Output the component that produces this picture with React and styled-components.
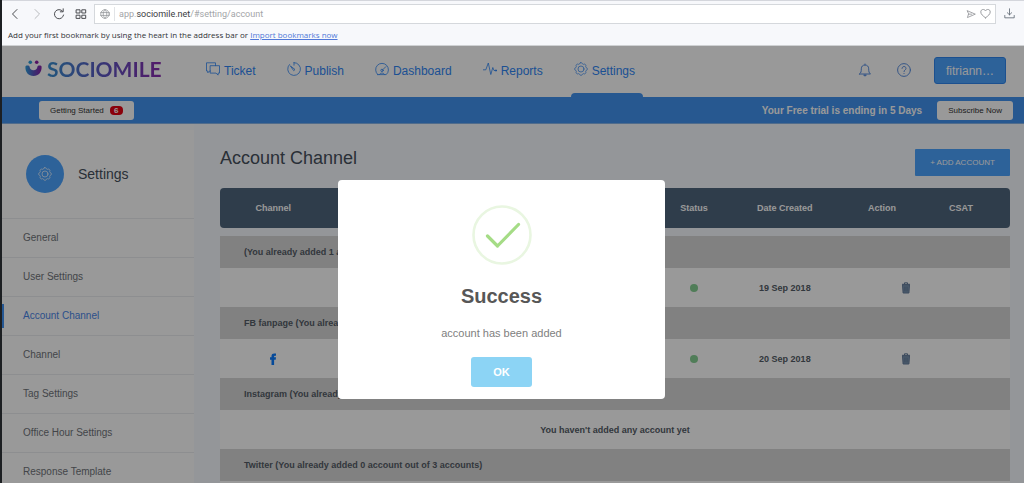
import React from "react";
import styled, { createGlobalStyle, css } from "styled-components";

const GlobalStyle = createGlobalStyle`
  *, *::before, *::after { box-sizing: border-box; }
  html, body, #root { height: 100%; }
  body {
    margin: 0;
    background: #fff;
    color: #55606b;
    font-family: "Liberation Sans", Arial, sans-serif;
    font-size: 10px;
  }
  button, input { font-family: inherit; margin: 0; }
  h1, h2, p, ul { margin: 0; padding: 0; font-weight: normal; }
  svg { display: block; flex: none; }
`;

const Window = styled.div`
  height: 100%;
  display: flex;
  flex-direction: column;
  overflow: hidden;
  border-left: 2px solid #1c1f22;
`;

/* Browser chrome */
const Chrome = styled.div`
  flex: none;
  background: #f7f8fb;
  border-top: 1px solid #d4d6dc;
  border-bottom: 1px solid #cfd1d3;
  font-family: "Open Sans", "Noto Sans", sans-serif;
`;
const Toolbar = styled.div`
  display: flex;
  align-items: center;
  height: 25px;
  padding: 0 9px 0 2px;
`;
const ToolButton = styled.button`
  display: grid;
  place-items: center;
  width: 22px;
  height: 20px;
  padding: 0;
  border: 0;
  background: none;
  color: ${(p) => (p.$faded ? "#b9bbbe" : "#4a4c50")};
`;
const AddressBar = styled.div`
  flex: 1;
  display: flex;
  align-items: center;
  gap: 4px;
  height: 20px;
  margin: 0 8px 0 2px;
  padding: 0 4px 0 5px;
  background: #fff;
  border: 1px solid #d5d8dc;
  color: #94969a;
`;
const Address = styled.div`
  flex: 1;
  padding-left: 4px;
  border-left: 1px solid #e2e4e7;
  font-family: Roboto, sans-serif;
  font-size: 9px;
  line-height: 14px;
  color: #a3a5a8;
  b { color: #3a3c40; font-weight: 400; }
`;
const BookmarkBar = styled.div`
  height: 19px;
  padding: 0 6px;
  font-size: 8px;
  line-height: 18px;
  color: #303236;
  a { color: #5078d8; }
`;

/* Application */
const Site = styled.div`
  position: relative;
  flex: 1;
  min-height: 0;
  display: flex;
  flex-direction: column;
  overflow: hidden;
  background: #f7faff;
`;
const Header = styled.header`
  flex: none;
  display: flex;
  align-items: stretch;
  height: 51px;
  padding-right: 18px;
  background: #fff;
`;
const Brand = styled.a`
  display: flex;
  align-items: center;
  gap: 5px;
  width: 177px;
  height: 45px;
  padding-left: 23px;
  text-decoration: none;
`;
const BrandName = styled.span`
  font: 700 21px/24px Lato, sans-serif;
  color: transparent;
  background: linear-gradient(90deg, #3a90d0 0%, #5a5cc4 45%, #8a2bb0 100%);
  background-clip: text;
  -webkit-background-clip: text;
`;
const Nav = styled.nav`
  flex: 1;
  display: flex;
  gap: 20px;
  padding-left: 24px;
`;
const NavLink = styled.a`
  position: relative;
  display: flex;
  align-items: center;
  gap: 4px;
  padding: 0 8px 2px 3px;
  font-size: 12px;
  color: #2f86f6;
  text-decoration: none;
  svg { margin-bottom: 4px; }
  ${(p) =>
    p.$active &&
    css`
      &::after {
        content: "";
        position: absolute;
        inset: auto 0 0 0;
        height: 4px;
        border-radius: 4px 4px 0 0;
        background: #4193f0;
      }
    `}
`;
const HeaderTools = styled.div`
  display: flex;
  align-items: center;
  gap: 25px;
  padding-bottom: 2px;
`;
const IconButton = styled.button`
  display: grid;
  place-items: center;
  padding: 0 0 1px;
  border: 0;
  background: none;
  color: #5a8fe0;
`;
const UserButton = styled.button`
  width: 72px;
  height: 27px;
  margin-left: -2px;
  padding: 0;
  border: 1px solid #2f86ee;
  border-radius: 3px;
  background: #4ba3ff;
  color: #fff;
  font-size: 12px;
`;
const TrialBar = styled.div`
  flex: none;
  display: flex;
  align-items: center;
  height: 27px;
  padding: 0 11px 0 37px;
  background: #4193f0;
  border-bottom: 1px solid #86b5ea;
`;
const SmallButton = styled.button`
  display: flex;
  align-items: center;
  justify-content: center;
  gap: 6px;
  height: 19px;
  padding: 0 11px;
  border: 0;
  border-radius: 3px;
  background: #fff;
  color: #333;
  font-size: 8px;
`;
const Count = styled.span`
  width: 13px;
  border-radius: 4px;
  background: #e60012;
  color: #fff;
  font-weight: bold;
  line-height: 9px;
  text-align: center;
`;
const TrialText = styled.p`
  margin: 0 15px 0 auto;
  font-size: 10px;
  font-weight: bold;
  color: #fff;
`;
const Body = styled.div`
  flex: 1;
  min-height: 0;
  display: flex;
`;
const Sidebar = styled.aside`
  flex: none;
  width: 192px;
  background: #fff;
  border-top: 6px solid #fbfcfe;
`;
const SidebarHead = styled.div`
  display: flex;
  align-items: center;
  gap: 14px;
  height: 88px;
  padding-left: 24px;
  font-size: 14px;
  color: #46505c;
`;
const Disc = styled.span`
  display: grid;
  place-items: center;
  width: 38px;
  height: 38px;
  border-radius: 50%;
  background: #4ba3ff;
  color: #fff;
`;
const SideLink = styled.a`
  position: relative;
  display: block;
  height: 39px;
  padding-left: 21px;
  border-top: 1px solid #ebedf0;
  font-size: 10px;
  line-height: 38px;
  color: ${(p) => (p.$active ? "#4a86e8" : "#70747a")};
  text-decoration: none;
  &::before {
    content: "";
    display: ${(p) => (p.$active ? "block" : "none")};
    position: absolute;
    left: 0;
    top: 7px;
    width: 2px;
    height: 24px;
    background: #3f92f5;
  }
`;
const Main = styled.main`
  flex: 1;
  min-width: 0;
  padding: 25px 14px 0 26px;
`;
const TitleRow = styled.div`
  display: flex;
  justify-content: space-between;
  height: 39px;
`;
const Title = styled.h1`
  font-size: 18px;
  line-height: 18px;
  color: #46505c;
`;
const AddButton = styled.button`
  width: 95px;
  height: 27px;
  padding: 0;
  border: 0;
  border-radius: 1px;
  background: #4ba3ff;
  color: #fff;
  font-size: 8px;
`;
const Table = styled.table`
  width: 100%;
  border-spacing: 0;
  table-layout: fixed;
  font-size: 9px;
  font-weight: bold;
  text-align: center;
  color: #545c66;
  th, td { padding: 0; }
  thead th {
    height: 40px;
    background: #4f667d;
    color: #fff;
  }
  thead th:first-child { border-radius: 4px 0 0 4px; }
  thead th:last-child { border-radius: 0 4px 4px 0; }
  tbody:first-of-type::before {
    content: "";
    display: table-row;
    height: 8px;
  }
`;
const GroupCell = styled.th`
  height: 32px;
  background: #d7d7d7;
  text-align: left;
  && { padding-left: 24px; }
`;
const Cell = styled.td`
  height: 39px;
  background: #fff;
`;
const ActionCell = styled(Cell)`
  && { padding-left: 49px; }
`;
const Dot = styled.span`
  display: block;
  width: 8px;
  height: 8px;
  margin: 0 auto;
  border-radius: 50%;
  background: #86d193;
`;
const ChannelMark = styled.svg`
  width: 8px;
  height: 12px;
  margin: 0 auto;
`;

/* Dialog */
const Backdrop = styled.div`
  position: absolute;
  inset: 0;
  display: flex;
  align-items: center;
  justify-content: center;
  padding: 50px 23px 0 0;
  background: rgba(0, 0, 0, 0.4);
`;
const Dialog = styled.section`
  display: flex;
  flex-direction: column;
  align-items: center;
  width: 327px;
  padding: 25px 0 12px;
  border-radius: 4px;
  background: #fff;
`;
const DialogTitle = styled.h2`
  margin-top: 18px;
  font-size: 20px;
  font-weight: bold;
  line-height: 26px;
  color: #575757;
`;
const DialogText = styled.p`
  margin-top: 15px;
  font-size: 11px;
  line-height: 18px;
  color: #808080;
`;
const OkButton = styled.button`
  width: 61px;
  height: 30px;
  margin-top: 15px;
  padding: 0;
  border: 0;
  border-radius: 3px;
  background: #8cd4f5;
  color: #fff;
  font-size: 11px;
  font-weight: bold;
`;

const Icon = ({ size = 14, box = 14, width = 1, children }) => (
  <svg
    width={size}
    height={size}
    viewBox={`0 0 ${box} ${box}`}
    fill="none"
    stroke="currentColor"
    strokeWidth={width}
    strokeLinecap="round"
    strokeLinejoin="round"
    aria-hidden="true"
  >
    {children}
  </svg>
);

const gearPath = (() => {
  const points = [];
  for (let i = 0; i < 96; i++) {
    const a = (i / 96) * Math.PI * 2;
    const r = 5.8 + 0.5 * Math.tanh(3 * Math.cos(8 * a));
    points.push(`${(7 + r * Math.sin(a)).toFixed(2)} ${(7 - r * Math.cos(a)).toFixed(2)}`);
  }
  return `M${points.join("L")}Z`;
})();
const Gear = () => (
  <Icon width={0.7}>
    <path d={gearPath} />
    <circle cx="7" cy="7" r="3" />
  </Icon>
);

const navItems = [
  ["Ticket", <Icon width={0.8}><path d="M4.5 9H3.6L1.8 10.8V9H.5V.8h9v2.9" /><path d="M4.5 3.7h9v7.4h-1.4v2L10 11.1H4.5z" /></Icon>],
  ["Publish", <Icon width={0.8}><path d="M7 .6v2.6M7 .6A6.4 6.4 0 1 1 2.5 2.5" /><path d="M3.7 4.2 8 7.5 7 8.4z" /></Icon>],
  ["Dashboard", <Icon width={0.8}><path d="M2.8 12.6h8.4A6.4 6.4 0 1 0 2.8 12.6z" /><circle cx="7" cy="8.4" r="1.2" /><path d="m8 7.5 2.8-2.8M4.5 12.3c.6-1.7 4.4-1.7 5 0" /></Icon>],
  ["Reports", <Icon width={0.8}><path d="M.3 7.8h2.5L5.3 1l2.5 11.5 2-7 1.2 3h1.2" /><circle cx="13" cy="8.5" r=".7" fill="currentColor" /></Icon>],
  ["Settings", <Gear />],
];

const sideItems = ["General", "User Settings", "Account Channel", "Channel", "Tag Settings", "Office Hour Settings", "Response Template"];

const groups = [
  { title: "(You already added 1 account out of 1 accounts)", date: "19 Sep 2018" },
  { title: "FB fanpage (You already added 1 account out of 3 accounts)", date: "20 Sep 2018", facebook: true },
  { title: "Instagram (You already added 0 account out of 3 accounts)", note: "You haven't added any account yet" },
  { title: "Twitter (You already added 0 account out of 3 accounts)" },
];

const FacebookMark = () => (
  <ChannelMark viewBox="0 0 8 12" aria-hidden="true">
    <path d="M2.5 12V6.7H1V4.3H2.5V3C2.5 1.1 3.6.4 5.2.4H7V2.7H5.9C5.3 2.7 5.1 3 5.1 3.5V4.3H7L6.7 6.7H5.1V12Z" fill="#0a7cff" />
  </ChannelMark>
);

const TrashIcon = () => (
  <svg width="10" height="12" viewBox="0 0 10 12" aria-hidden="true">
    <path d="M1.5 2.8h7l-.6 8.2H2.1z" fill="#7f97b4" stroke="#647c9c" />
    <path d="M1 2.3h8M3.5 2V.8h3V2" fill="none" stroke="#647c9c" />
    <path d="M3.7 4.5v5M5 4.5v5M6.3 4.5v5" stroke="#5c7594" strokeWidth=".6" />
  </svg>
);

const BrandMark = () => (
  <svg width="17" height="17" viewBox="0 0 17 17" aria-hidden="true">
    <defs>
      <linearGradient id="smile" x1="0" x2="1">
        <stop offset="0" stopColor="#2ea0dc" />
        <stop offset=".5" stopColor="#5a55c0" />
        <stop offset="1" stopColor="#8a1fa8" />
      </linearGradient>
    </defs>
    <path d="M.4 6.8C.4 5 4.4 5 4.6 6.8 4.8 9 6.2 10.3 8.5 10.3S12.2 9 12.4 6.8C12.6 5 16.6 5 16.6 6.8 16.8 12.2 13.6 16 8.5 16S.2 12.2.4 6.8z" fill="url(#smile)" />
    <circle cx="5.3" cy="2.3" r="1.8" fill="#2ea0dc" />
    <circle cx="11.7" cy="2.3" r="1.8" fill="#8a1fa8" />
  </svg>
);

export default function App() {
  return (
    <Window>
      <GlobalStyle />
      <Chrome>
        <Toolbar>
          <ToolButton aria-label="Back"><Icon><path d="M9 2.5 4.5 7 9 11.5" /></Icon></ToolButton>
          <ToolButton aria-label="Forward" $faded><Icon><path d="M5 2.5 9.5 7 5 11.5" /></Icon></ToolButton>
          <ToolButton aria-label="Reload"><Icon><path d="M10.6 4.2A4.6 4.6 0 1 0 11.6 8" /><path d="M11.2 1.8v3H8.3" /></Icon></ToolButton>
          <ToolButton aria-label="Speed dial"><Icon><path d="M2.5 2.8H6V6H2.5zM8.2 2.8h3.5V6H8.2zM2.5 8.2H6v3.2H2.5zM8.2 8.2h3.5v3.2H8.2z" /></Icon></ToolButton>
          <AddressBar>
            <Icon size={10} width={1.1}><circle cx="7" cy="7" r="6" /><path d="M1 5h12M1 9h12M7 1C3.5 4.5 3.5 9.5 7 13M7 1c3.5 3.5 3.5 8.5 0 12" /></Icon>
            <Address>app.<b>sociomile.net</b>/#setting/account</Address>
            <Icon size={10} width={1.2}><path d="m2 2.5 11 4.7L2 12l1.5-4.8zM3.5 7.2H8" /></Icon>
            <Icon size={11} width={1.2}><path d="M7 12.5C3.5 10 1 7.8 1 4.9 1 1.5 5.5.8 7 3.6 8.5.8 13 1.5 13 4.9c0 2.9-2.5 5.1-6 7.6z" /></Icon>
          </AddressBar>
          <Icon size={11}><path d="M7 1v7.5M4.2 6 7 8.7 9.8 6M1 9.5v3h12v-3" /></Icon>
        </Toolbar>
        <BookmarkBar>
          Add your first bookmark by using the heart in the address bar or <a href="#import">Import bookmarks now</a>
        </BookmarkBar>
      </Chrome>

      <Site>
        <Header>
          <Brand href="#home"><BrandMark /><BrandName>SOCIOMILE</BrandName></Brand>
          <Nav>
            {navItems.map(([label, icon]) => (
              <NavLink key={label} href={`#${label.toLowerCase()}`} $active={label === "Settings"}>
                {icon}{label}
              </NavLink>
            ))}
          </Nav>
          <HeaderTools>
            <IconButton aria-label="Notifications">
              <Icon><path d="M1.5 11h11c-1.5-1.2-1.8-2.3-1.8-5.2C10.7 3.4 9.2 2 7 2S3.3 3.4 3.3 5.8C3.3 8.7 3 9.8 1.5 11zM7 2V1" /><path d="M5.8 12.3c.4 1 2 1 2.4 0z" fill="currentColor" /></Icon>
            </IconButton>
            <IconButton aria-label="Help">
              <Icon><circle cx="7" cy="7" r="6.4" /><path d="M5 5.4c0-2.6 4-2.6 4 0C9 7 7 6.8 7 8.6M7 10.5v.1" /></Icon>
            </IconButton>
            <UserButton>fitriann…</UserButton>
          </HeaderTools>
        </Header>
        <TrialBar>
          <SmallButton>Getting Started <Count>6</Count></SmallButton>
          <TrialText>Your Free trial is ending in 5 Days</TrialText>
          <SmallButton>Subscribe Now</SmallButton>
        </TrialBar>
        <Body>
          <Sidebar>
            <SidebarHead><Disc><Gear /></Disc>Settings</SidebarHead>
            <nav>
              {sideItems.map((label) => (
                <SideLink key={label} href="#setting" $active={label === "Account Channel"}>{label}</SideLink>
              ))}
            </nav>
          </Sidebar>
          <Main>
            <TitleRow>
              <Title>Account Channel</Title>
              <AddButton>+ ADD ACCOUNT</AddButton>
            </TitleRow>
            <Table>
              <colgroup>
                <col width="13.5%" />
                <col />
                <col width="6%" />
                <col width="17%" />
                <col width="7.6%" />
                <col width="12.4%" />
              </colgroup>
              <thead>
                <tr><th>Channel</th><th /><th>Status</th><th>Date Created</th><th>Action</th><th>CSAT</th></tr>
              </thead>
              {groups.map((g) => (
                <tbody key={g.title}>
                  <tr><GroupCell colSpan={6}>{g.title}</GroupCell></tr>
                  {g.date ? (
                    <tr>
                      <Cell>{g.facebook && <FacebookMark />}</Cell>
                      <Cell />
                      <Cell><Dot /></Cell>
                      <Cell>{g.date}</Cell>
                      <ActionCell><TrashIcon /></ActionCell>
                      <Cell />
                    </tr>
                  ) : (
                    <tr><Cell colSpan={6}>{g.note}</Cell></tr>
                  )}
                </tbody>
              ))}
            </Table>
          </Main>
        </Body>
        <Backdrop>
          <Dialog role="dialog" aria-labelledby="dialog-title">
            <svg width="60" height="60" viewBox="0 0 60 60" fill="none" aria-hidden="true">
              <circle cx="30" cy="30" r="28.5" stroke="#e9f6e1" strokeWidth="2.6" />
              <path d="M15.5 31 25.5 41 46.5 19.5" stroke="#a5dc86" strokeWidth="3.2" strokeLinecap="round" strokeLinejoin="round" />
            </svg>
            <DialogTitle id="dialog-title">Success</DialogTitle>
            <DialogText>account has been added</DialogText>
            <OkButton>OK</OkButton>
          </Dialog>
        </Backdrop>
      </Site>
    </Window>
  );
}
